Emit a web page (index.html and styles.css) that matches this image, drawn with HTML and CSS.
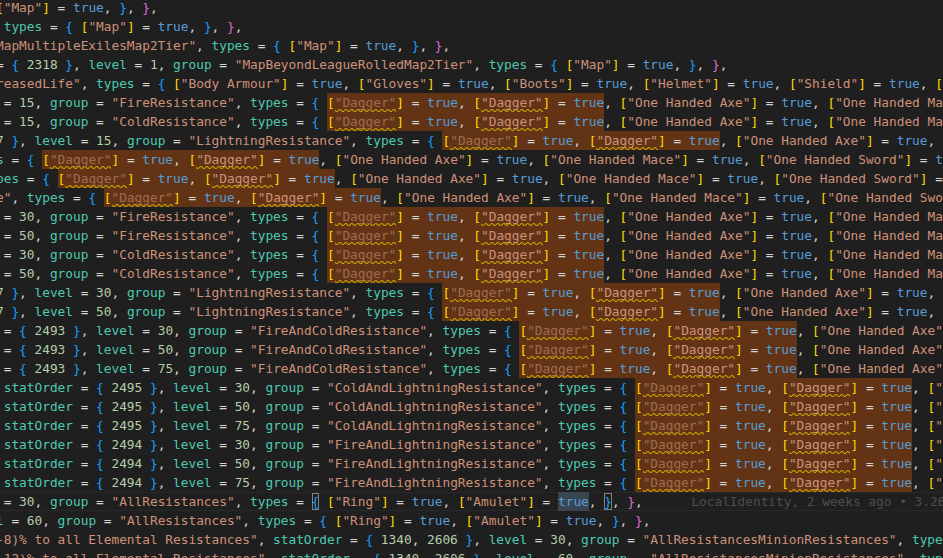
FILE: index.html
```html
<!DOCTYPE html>
<html lang="en">
<head>
<meta charset="utf-8">
<title>mods.lua</title>
<link rel="stylesheet" href="styles.css">
</head>
<body>
<main class="editor">
<div class="lines">
<div class="line"><span class="y">[</span><span class="s">"Map"</span><span class="y">]</span> = <span class="t">true</span>, <span class="b">}</span>, <span class="m">}</span>,</div>
<div class="line"> <span class="k">types</span> = <span class="b">{</span> <span class="y">[</span><span class="s">"Map"</span><span class="y">]</span> = <span class="t">true</span>, <span class="b">}</span>, <span class="m">}</span>,</div>
<div class="line"><span class="s">MapMultipleExilesMap2Tier"</span>, <span class="k">types</span> = <span class="b">{</span> <span class="y">[</span><span class="s">"Map"</span><span class="y">]</span> = <span class="t">true</span>, <span class="b">}</span>, <span class="m">}</span>,</div>
<div class="line">= <span class="b">{</span> <span class="n">2318</span> <span class="b">}</span>, <span class="k">level</span> = <span class="n">1</span>, <span class="k">group</span> = <span class="s">"MapBeyondLeagueRolledMap2Tier"</span>, <span class="k">types</span> = <span class="b">{</span> <span class="y">[</span><span class="s">"Map"</span><span class="y">]</span> = <span class="t">true</span>, <span class="b">}</span>, <span class="m">}</span>,</div>
<div class="line"><span class="s">reasedLife"</span>, <span class="k">types</span> = <span class="b">{</span> <span class="y">[</span><span class="s">"Body Armour"</span><span class="y">]</span> = <span class="t">true</span>, <span class="y">[</span><span class="s">"Gloves"</span><span class="y">]</span> = <span class="t">true</span>, <span class="y">[</span><span class="s">"Boots"</span><span class="y">]</span> = <span class="t">true</span>, <span class="y">[</span><span class="s">"Helmet"</span><span class="y">]</span> = <span class="t">true</span>, <span class="y">[</span><span class="s">"Shield"</span><span class="y">]</span> = <span class="t">true</span>, <span class="y">[</span></div>
<div class="line"> = <span class="n">15</span>, <span class="k">group</span> = <span class="s">"FireResistance"</span>, <span class="k">types</span> = <span class="b">{</span> <span class="hl"><span class="y">[</span><span class="w dim">"Dagger"</span><span class="y">]</span> = <span class="t">true</span>, <span class="y">[</span><span class="w">"Dagger"</span><span class="y">]</span> = <span class="t">true</span></span>, <span class="y">[</span><span class="s">"One Handed Axe"</span><span class="y">]</span> = <span class="t">true</span>, <span class="y">[</span><span class="s">"One Handed Mace"</span><span class="y">]</span></div>
<div class="line"> = <span class="n">15</span>, <span class="k">group</span> = <span class="s">"ColdResistance"</span>, <span class="k">types</span> = <span class="b">{</span> <span class="hl"><span class="y">[</span><span class="w dim">"Dagger"</span><span class="y">]</span> = <span class="t">true</span>, <span class="y">[</span><span class="w">"Dagger"</span><span class="y">]</span> = <span class="t">true</span></span>, <span class="y">[</span><span class="s">"One Handed Axe"</span><span class="y">]</span> = <span class="t">true</span>, <span class="y">[</span><span class="s">"One Handed Mace"</span><span class="y">]</span></div>
<div class="line"><span class="n">7</span> <span class="b">}</span>, <span class="k">level</span> = <span class="n">15</span>, <span class="k">group</span> = <span class="s">"LightningResistance"</span>, <span class="k">types</span> = <span class="b">{</span> <span class="hl"><span class="y">[</span><span class="w dim">"Dagger"</span><span class="y">]</span> = <span class="t">true</span>, <span class="y">[</span><span class="w">"Dagger"</span><span class="y">]</span> = <span class="t">true</span></span>, <span class="y">[</span><span class="s">"One Handed Axe"</span><span class="y">]</span> = <span class="t">true</span>, <span class="y">[</span></div>
<div class="line"><span class="k">s</span> = <span class="b">{</span> <span class="hl"><span class="y">[</span><span class="w dim">"Dagger"</span><span class="y">]</span> = <span class="t">true</span>, <span class="y">[</span><span class="w">"Dagger"</span><span class="y">]</span> = <span class="t">true</span></span>, <span class="y">[</span><span class="s">"One Handed Axe"</span><span class="y">]</span> = <span class="t">true</span>, <span class="y">[</span><span class="s">"One Handed Mace"</span><span class="y">]</span> = <span class="t">true</span>, <span class="y">[</span><span class="s">"One Handed Sword"</span><span class="y">]</span> = <span class="t">true</span></div>
<div class="line"><span class="k">pes</span> = <span class="b">{</span> <span class="hl"><span class="y">[</span><span class="w dim">"Dagger"</span><span class="y">]</span> = <span class="t">true</span>, <span class="y">[</span><span class="w">"Dagger"</span><span class="y">]</span> = <span class="t">true</span></span>, <span class="y">[</span><span class="s">"One Handed Axe"</span><span class="y">]</span> = <span class="t">true</span>, <span class="y">[</span><span class="s">"One Handed Mace"</span><span class="y">]</span> = <span class="t">true</span>, <span class="y">[</span><span class="s">"One Handed Sword"</span><span class="y">]</span> = </div>
<div class="line"><span class="s">e"</span>, <span class="k">types</span> = <span class="b">{</span> <span class="hl"><span class="y">[</span><span class="w dim">"Dagger"</span><span class="y">]</span> = <span class="t">true</span>, <span class="y">[</span><span class="w">"Dagger"</span><span class="y">]</span> = <span class="t">true</span></span>, <span class="y">[</span><span class="s">"One Handed Axe"</span><span class="y">]</span> = <span class="t">true</span>, <span class="y">[</span><span class="s">"One Handed Mace"</span><span class="y">]</span> = <span class="t">true</span>, <span class="y">[</span><span class="s">"One Handed Sword"</span></div>
<div class="line"> = <span class="n">30</span>, <span class="k">group</span> = <span class="s">"FireResistance"</span>, <span class="k">types</span> = <span class="b">{</span> <span class="hl"><span class="y">[</span><span class="w dim">"Dagger"</span><span class="y">]</span> = <span class="t">true</span>, <span class="y">[</span><span class="w">"Dagger"</span><span class="y">]</span> = <span class="t">true</span></span>, <span class="y">[</span><span class="s">"One Handed Axe"</span><span class="y">]</span> = <span class="t">true</span>, <span class="y">[</span><span class="s">"One Handed Mace"</span><span class="y">]</span></div>
<div class="line"> = <span class="n">50</span>, <span class="k">group</span> = <span class="s">"FireResistance"</span>, <span class="k">types</span> = <span class="b">{</span> <span class="hl"><span class="y">[</span><span class="w dim">"Dagger"</span><span class="y">]</span> = <span class="t">true</span>, <span class="y">[</span><span class="w">"Dagger"</span><span class="y">]</span> = <span class="t">true</span></span>, <span class="y">[</span><span class="s">"One Handed Axe"</span><span class="y">]</span> = <span class="t">true</span>, <span class="y">[</span><span class="s">"One Handed Mace"</span><span class="y">]</span></div>
<div class="line"> = <span class="n">30</span>, <span class="k">group</span> = <span class="s">"ColdResistance"</span>, <span class="k">types</span> = <span class="b">{</span> <span class="hl"><span class="y">[</span><span class="w dim">"Dagger"</span><span class="y">]</span> = <span class="t">true</span>, <span class="y">[</span><span class="w">"Dagger"</span><span class="y">]</span> = <span class="t">true</span></span>, <span class="y">[</span><span class="s">"One Handed Axe"</span><span class="y">]</span> = <span class="t">true</span>, <span class="y">[</span><span class="s">"One Handed Mace"</span><span class="y">]</span></div>
<div class="line"> = <span class="n">50</span>, <span class="k">group</span> = <span class="s">"ColdResistance"</span>, <span class="k">types</span> = <span class="b">{</span> <span class="hl"><span class="y">[</span><span class="w dim">"Dagger"</span><span class="y">]</span> = <span class="t">true</span>, <span class="y">[</span><span class="w">"Dagger"</span><span class="y">]</span> = <span class="t">true</span></span>, <span class="y">[</span><span class="s">"One Handed Axe"</span><span class="y">]</span> = <span class="t">true</span>, <span class="y">[</span><span class="s">"One Handed Mace"</span><span class="y">]</span></div>
<div class="line"><span class="n">7</span> <span class="b">}</span>, <span class="k">level</span> = <span class="n">30</span>, <span class="k">group</span> = <span class="s">"LightningResistance"</span>, <span class="k">types</span> = <span class="b">{</span> <span class="hl"><span class="y">[</span><span class="w dim">"Dagger"</span><span class="y">]</span> = <span class="t">true</span>, <span class="y">[</span><span class="w">"Dagger"</span><span class="y">]</span> = <span class="t">true</span></span>, <span class="y">[</span><span class="s">"One Handed Axe"</span><span class="y">]</span> = <span class="t">true</span>, <span class="y">[</span></div>
<div class="line"><span class="n">7</span> <span class="b">}</span>, <span class="k">level</span> = <span class="n">50</span>, <span class="k">group</span> = <span class="s">"LightningResistance"</span>, <span class="k">types</span> = <span class="b">{</span> <span class="hl"><span class="y">[</span><span class="w dim">"Dagger"</span><span class="y">]</span> = <span class="t">true</span>, <span class="y">[</span><span class="w">"Dagger"</span><span class="y">]</span> = <span class="t">true</span></span>, <span class="y">[</span><span class="s">"One Handed Axe"</span><span class="y">]</span> = <span class="t">true</span>, <span class="y">[</span></div>
<div class="line"> = <span class="b">{</span> <span class="n">2493</span> <span class="b">}</span>, <span class="k">level</span> = <span class="n">30</span>, <span class="k">group</span> = <span class="s">"FireAndColdResistance"</span>, <span class="k">types</span> = <span class="b">{</span> <span class="hl"><span class="y">[</span><span class="w dim">"Dagger"</span><span class="y">]</span> = <span class="t">true</span>, <span class="y">[</span><span class="w">"Dagger"</span><span class="y">]</span> = <span class="t">true</span></span>, <span class="y">[</span><span class="s">"One Handed Axe"</span><span class="y">]</span> = <span class="t">true</span></div>
<div class="line"> = <span class="b">{</span> <span class="n">2493</span> <span class="b">}</span>, <span class="k">level</span> = <span class="n">50</span>, <span class="k">group</span> = <span class="s">"FireAndColdResistance"</span>, <span class="k">types</span> = <span class="b">{</span> <span class="hl"><span class="y">[</span><span class="w dim">"Dagger"</span><span class="y">]</span> = <span class="t">true</span>, <span class="y">[</span><span class="w">"Dagger"</span><span class="y">]</span> = <span class="t">true</span></span>, <span class="y">[</span><span class="s">"One Handed Axe"</span><span class="y">]</span> = <span class="t">true</span></div>
<div class="line"> = <span class="b">{</span> <span class="n">2493</span> <span class="b">}</span>, <span class="k">level</span> = <span class="n">75</span>, <span class="k">group</span> = <span class="s">"FireAndColdResistance"</span>, <span class="k">types</span> = <span class="b">{</span> <span class="hl"><span class="y">[</span><span class="w dim">"Dagger"</span><span class="y">]</span> = <span class="t">true</span>, <span class="y">[</span><span class="w">"Dagger"</span><span class="y">]</span> = <span class="t">true</span></span>, <span class="y">[</span><span class="s">"One Handed Axe"</span><span class="y">]</span> = <span class="t">true</span></div>
<div class="line"> <span class="k">statOrder</span> = <span class="b">{</span> <span class="n">2495</span> <span class="b">}</span>, <span class="k">level</span> = <span class="n">30</span>, <span class="k">group</span> = <span class="s">"ColdAndLightningResistance"</span>, <span class="k">types</span> = <span class="b">{</span> <span class="hl"><span class="y">[</span><span class="w dim">"Dagger"</span><span class="y">]</span> = <span class="t">true</span>, <span class="y">[</span><span class="w">"Dagger"</span><span class="y">]</span> = <span class="t">true</span></span>, <span class="y">[</span><span class="s">"</span></div>
<div class="line"> <span class="k">statOrder</span> = <span class="b">{</span> <span class="n">2495</span> <span class="b">}</span>, <span class="k">level</span> = <span class="n">50</span>, <span class="k">group</span> = <span class="s">"ColdAndLightningResistance"</span>, <span class="k">types</span> = <span class="b">{</span> <span class="hl"><span class="y">[</span><span class="w dim">"Dagger"</span><span class="y">]</span> = <span class="t">true</span>, <span class="y">[</span><span class="w">"Dagger"</span><span class="y">]</span> = <span class="t">true</span></span>, <span class="y">[</span><span class="s">"</span></div>
<div class="line"> <span class="k">statOrder</span> = <span class="b">{</span> <span class="n">2495</span> <span class="b">}</span>, <span class="k">level</span> = <span class="n">75</span>, <span class="k">group</span> = <span class="s">"ColdAndLightningResistance"</span>, <span class="k">types</span> = <span class="b">{</span> <span class="hl"><span class="y">[</span><span class="w dim">"Dagger"</span><span class="y">]</span> = <span class="t">true</span>, <span class="y">[</span><span class="w">"Dagger"</span><span class="y">]</span> = <span class="t">true</span></span>, <span class="y">[</span><span class="s">"</span></div>
<div class="line"> <span class="k">statOrder</span> = <span class="b">{</span> <span class="n">2494</span> <span class="b">}</span>, <span class="k">level</span> = <span class="n">30</span>, <span class="k">group</span> = <span class="s">"FireAndLightningResistance"</span>, <span class="k">types</span> = <span class="b">{</span> <span class="hl"><span class="y">[</span><span class="w dim">"Dagger"</span><span class="y">]</span> = <span class="t">true</span>, <span class="y">[</span><span class="w">"Dagger"</span><span class="y">]</span> = <span class="t">true</span></span>, <span class="y">[</span><span class="s">"</span></div>
<div class="line"> <span class="k">statOrder</span> = <span class="b">{</span> <span class="n">2494</span> <span class="b">}</span>, <span class="k">level</span> = <span class="n">50</span>, <span class="k">group</span> = <span class="s">"FireAndLightningResistance"</span>, <span class="k">types</span> = <span class="b">{</span> <span class="hl"><span class="y">[</span><span class="w dim">"Dagger"</span><span class="y">]</span> = <span class="t">true</span>, <span class="y">[</span><span class="w">"Dagger"</span><span class="y">]</span> = <span class="t">true</span></span>, <span class="y">[</span><span class="s">"</span></div>
<div class="line"> <span class="k">statOrder</span> = <span class="b">{</span> <span class="n">2494</span> <span class="b">}</span>, <span class="k">level</span> = <span class="n">75</span>, <span class="k">group</span> = <span class="s">"FireAndLightningResistance"</span>, <span class="k">types</span> = <span class="b">{</span> <span class="hl"><span class="y">[</span><span class="w dim">"Dagger"</span><span class="y">]</span> = <span class="t">true</span>, <span class="y">[</span><span class="w">"Dagger"</span><span class="y">]</span> = <span class="t">true</span></span>, <span class="y">[</span><span class="s">"</span></div>
<div class="line current"> = <span class="n">30</span>, <span class="k">group</span> = <span class="s">"AllResistances"</span>, <span class="k">types</span> = <span class="b match">{</span> <span class="y">[</span><span class="s">"Ring"</span><span class="y">]</span> = <span class="t">true</span>, <span class="y">[</span><span class="s">"Amulet"</span><span class="y">]</span> = <span class="t word">true</span>, <span class="b match">}</span>, <span class="m">}</span>,      <span class="blame">LocalIdentity, 2 weeks ago • 3.26 Mods</span></div>
<div class="line"><span class="k">l</span> = <span class="n">60</span>, <span class="k">group</span> = <span class="s">"AllResistances"</span>, <span class="k">types</span> = <span class="b">{</span> <span class="y">[</span><span class="s">"Ring"</span><span class="y">]</span> = <span class="t">true</span>, <span class="y">[</span><span class="s">"Amulet"</span><span class="y">]</span> = <span class="t">true</span>, <span class="b">}</span>, <span class="m">}</span>,</div>
<div class="line"><span class="s">-8)% to all Elemental Resistances"</span>, <span class="k">statOrder</span> = <span class="b">{</span> <span class="n">1340</span>, <span class="n">2606</span> <span class="b">}</span>, <span class="k">level</span> = <span class="n">30</span>, <span class="k">group</span> = <span class="s">"AllResistancesMinionResistances"</span>, <span class="k">types</span></div>
<div class="line"><span class="s">-12)% to all Elemental Resistances"</span>, <span class="k">statOrder</span> = <span class="b">{</span> <span class="n">1340</span>, <span class="n">2606</span> <span class="b">}</span>, <span class="k">level</span> = <span class="n">60</span>, <span class="k">group</span> = <span class="s">"AllResistancesMinionResistances"</span>, <span class="k">types</span></div>
</div>
</main>
</body>
</html>
```
FILE: styles.css
```css
html, body {
  margin: 0;
  padding: 0;
  background: #1f1f1f;
}

.editor {
  width: 943px;
  height: 558px;
  overflow: hidden;
  background: #1f1f1f;
  color: #d4d4d4;
  font-family: "DejaVu Sans Mono", monospace;
  font-size: 12.8px;
  letter-spacing: -0.009px;
}

.lines {
  margin: -2px 0 0 -4px;
  width: 1000px;
}

.line {
  height: 19px;
  line-height: 19px;
  white-space: pre;
  overflow: hidden;
}

.current {
  box-shadow: inset 0 1px 0 #282828, inset 0 -1px 0 #282828;
}

.hl {
  display: inline-block;
  height: 19px;
  background: #623415;
}

.k { color: #4ec9b0; }
.s { color: #ce9178; }
.t { color: #569cd6; }
.n { color: #b5cea8; }
.y { color: #ffd700; }
.b { color: #179fff; }
.m { color: #da70d6; }

.w {
  display: inline-block;
  height: 19px;
  color: #ce9178;
  background: url("data:image/svg+xml,%3Csvg xmlns='http://www.w3.org/2000/svg' viewBox='0 0 6 3' height='3' width='6'%3E%3Cg fill='%23cca700'%3E%3Cpolygon points='5.5,0 2.5,3 1.1,3 4.1,0'/%3E%3Cpolygon points='4,0 6,2 6,0.6 5.4,0'/%3E%3Cpolygon points='0,2 1,3 2.4,3 0,0.6'/%3E%3C/g%3E%3C/svg%3E") repeat-x left bottom;
}

.dim { color: #a06c4e; }

.match {
  display: inline-block;
  height: 17px;
  line-height: 17px;
  box-shadow: inset 0 0 0 1px #7f7f7f;
  vertical-align: top;
  margin-top: 1px;
}

.word {
  display: inline-block;
  height: 19px;
  background: #3a4552;
}

.blame { color: #4d4d4d; margin-left: 2.5px; }
```
